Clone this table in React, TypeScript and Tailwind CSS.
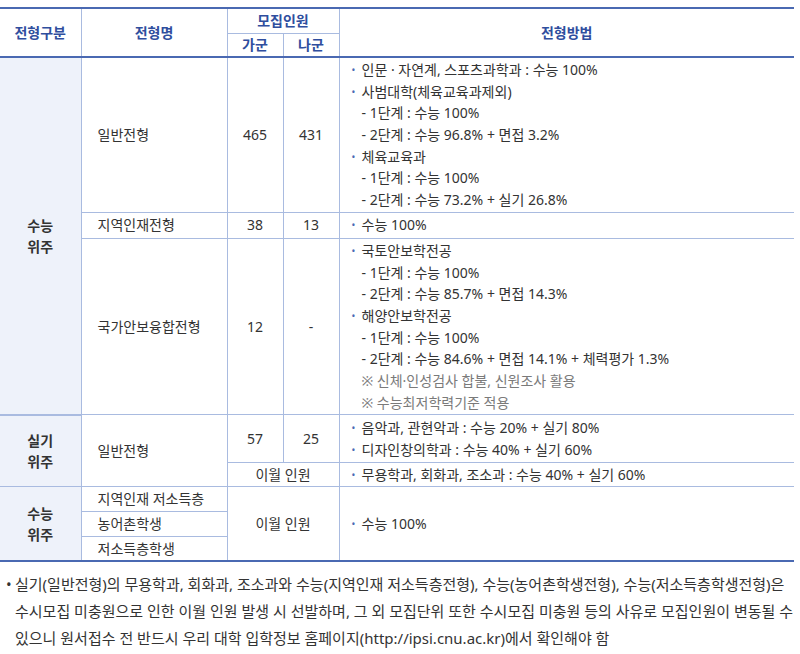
import React from "react";

const B = () => <span className="inline-block w-[10px] text-[10px] leading-[10px] text-[#4a6ab3] align-[1px]">•</span>;

function Item({ children }: { children: React.ReactNode }) {
  return (
    <div className="whitespace-nowrap h-[21.7px]">
      <B />
      {children}
    </div>
  );
}
function Sub({ children, gray }: { children: React.ReactNode; gray?: boolean }) {
  return <div className={"whitespace-nowrap h-[21.7px] pl-[10px] " + (gray ? "text-[#7a7a7a]" : "")}>{children}</div>;
}

const th = "border border-[#a9bbe0] text-center font-bold text-[#2f4e9e] text-[14px] leading-[20px] p-0";
const td = "border border-[#a9bbe0] p-0 text-[14px] leading-[20px] text-[#333]";
const cat = "border border-[#a9bbe0] p-0 bg-[#eef2fa] text-center font-bold text-[14px] text-[#333] leading-[21px]";

export default function App() {
  return (
    <div className="w-[800px] bg-white pt-[7px]" style={{ fontFamily: '"Noto Sans", "Noto Sans CJK KR", sans-serif' }}>
      <table className="w-[794px] border-collapse table-fixed border-t-2 border-b-2 border-t-[#4a69b2] border-b-[#4a69b2]">
        <colgroup>
          <col className="w-[81px]" />
          <col className="w-[146px]" />
          <col className="w-[56px]" />
          <col className="w-[56px]" />
          <col />
        </colgroup>
        <thead>
          <tr className="h-[25px]">
            <th rowSpan={2} className={th + " border-l-0 border-t-0 border-b-2 border-b-[#4a69b2]"}>전형구분</th>
            <th rowSpan={2} className={th + " border-t-0 border-b-2 border-b-[#4a69b2]"}>전형명</th>
            <th colSpan={2} className={th + " border-t-0"}>모집인원</th>
            <th rowSpan={2} className={th + " border-r-0 border-t-0 border-b-2 border-b-[#4a69b2]"}>전형방법</th>
          </tr>
          <tr className="h-[24px]">
            <th className={th + " border-b-2 border-b-[#4a69b2]"}>가군</th>
            <th className={th + " border-b-2 border-b-[#4a69b2]"}>나군</th>
          </tr>
        </thead>
        <tbody>
          <tr>
            <td rowSpan={3} className={cat + " border-l-0"}>수능<br />위주</td>
            <td className={td + " pl-[16px]"}>일반전형</td>
            <td className={td + " text-center"}>465</td>
            <td className={td + " text-center"}>431</td>
            <td className={td + " border-r-0 pl-[12px] py-[1px] leading-[21.7px]"}>
              <Item>인문 · 자연계, 스포츠과학과 : 수능 100%</Item>
              <Item>사범대학(체육교육과제외)</Item>
              <Sub>- 1단계 : 수능 100%</Sub>
              <Sub>- 2단계 : 수능 96.8% + 면접 3.2%</Sub>
              <Item>체육교육과</Item>
              <Sub>- 1단계 : 수능 100%</Sub>
              <Sub>- 2단계 : 수능 73.2% + 실기 26.8%</Sub>
            </td>
          </tr>
          <tr className="h-[26px]">
            <td className={td + " pl-[16px]"}>지역인재전형</td>
            <td className={td + " text-center"}>38</td>
            <td className={td + " text-center"}>13</td>
            <td className={td + " border-r-0 pl-[12px] leading-[21.7px]"}>
              <Item>수능 100%</Item>
            </td>
          </tr>
          <tr>
            <td className={td + " pl-[16px]"}>국가안보융합전형</td>
            <td className={td + " text-center"}>12</td>
            <td className={td + " text-center"}>-</td>
            <td className={td + " border-r-0 pl-[12px] py-[1px] leading-[21.7px]"}>
              <Item>국토안보학전공</Item>
              <Sub>- 1단계 : 수능 100%</Sub>
              <Sub>- 2단계 : 수능 85.7% + 면접 14.3%</Sub>
              <Item>해양안보학전공</Item>
              <Sub>- 1단계 : 수능 100%</Sub>
              <Sub>- 2단계 : 수능 84.6% + 면접 14.1% + 체력평가 1.3%</Sub>
              <Sub gray>※ 신체·인성검사 합불, 신원조사 활용</Sub>
              <Sub gray>※ 수능최저학력기준 적용</Sub>
            </td>
          </tr>
          <tr className="h-[48px]">
            <td rowSpan={2} className={cat + " border-l-0 border-t-2 border-t-[#a9bbe0]"}>실기<br />위주</td>
            <td rowSpan={2} className={td + " pl-[16px]"}>일반전형</td>
            <td className={td + " text-center"}>57</td>
            <td className={td + " text-center"}>25</td>
            <td className={td + " border-r-0 pl-[12px] leading-[21.7px]"}>
              <Item>음악과, 관현악과 : 수능 20% + 실기 80%</Item>
              <Item>디자인창의학과 : 수능 40% + 실기 60%</Item>
            </td>
          </tr>
          <tr className="h-[24px]">
            <td colSpan={2} className={td + " text-center"}>이월 인원</td>
            <td className={td + " border-r-0 pl-[12px] leading-[21.7px]"}>
              <Item>무용학과, 회화과, 조소과 : 수능 40% + 실기 60%</Item>
            </td>
          </tr>
          <tr className="h-[25px]">
            <td rowSpan={3} className={cat + " border-l-0"}>수능<br />위주</td>
            <td className={td + " pl-[16px]"}>지역인재 저소득층</td>
            <td rowSpan={3} colSpan={2} className={td + " text-center"}>이월 인원</td>
            <td rowSpan={3} className={td + " border-r-0 pl-[12px] leading-[21.7px]"}>
              <Item>수능 100%</Item>
            </td>
          </tr>
          <tr className="h-[25px]">
            <td className={td + " pl-[16px]"}>농어촌학생</td>
          </tr>
          <tr className="h-[24px]">
            <td className={td + " pl-[16px]"}>저소득층학생</td>
          </tr>
        </tbody>
      </table>
      <div className="flex pl-[6px] pr-[6px] pt-[9px] text-[15px] leading-[27px] text-[#333]">
        <span className="w-[9px] shrink-0">•</span>
        <p>
          실기(일반전형)의 무용학과, 회화과, 조소과와 수능(지역인재 저소득층전형), 수능(농어촌학생전형), 수능(저소득층학생전형)은 수시모집 미충원으로 인한 이월 인원 발생 시 선발하며, 그 외 모집단위 또한 수시모집 미충원 등의 사유로 모집인원이 변동될 수 있으니 원서접수 전 반드시 우리 대학 입학정보 홈페이지(http://ipsi.cnu.ac.kr)에서 확인해야 함
        </p>
      </div>
    </div>
  );
}
